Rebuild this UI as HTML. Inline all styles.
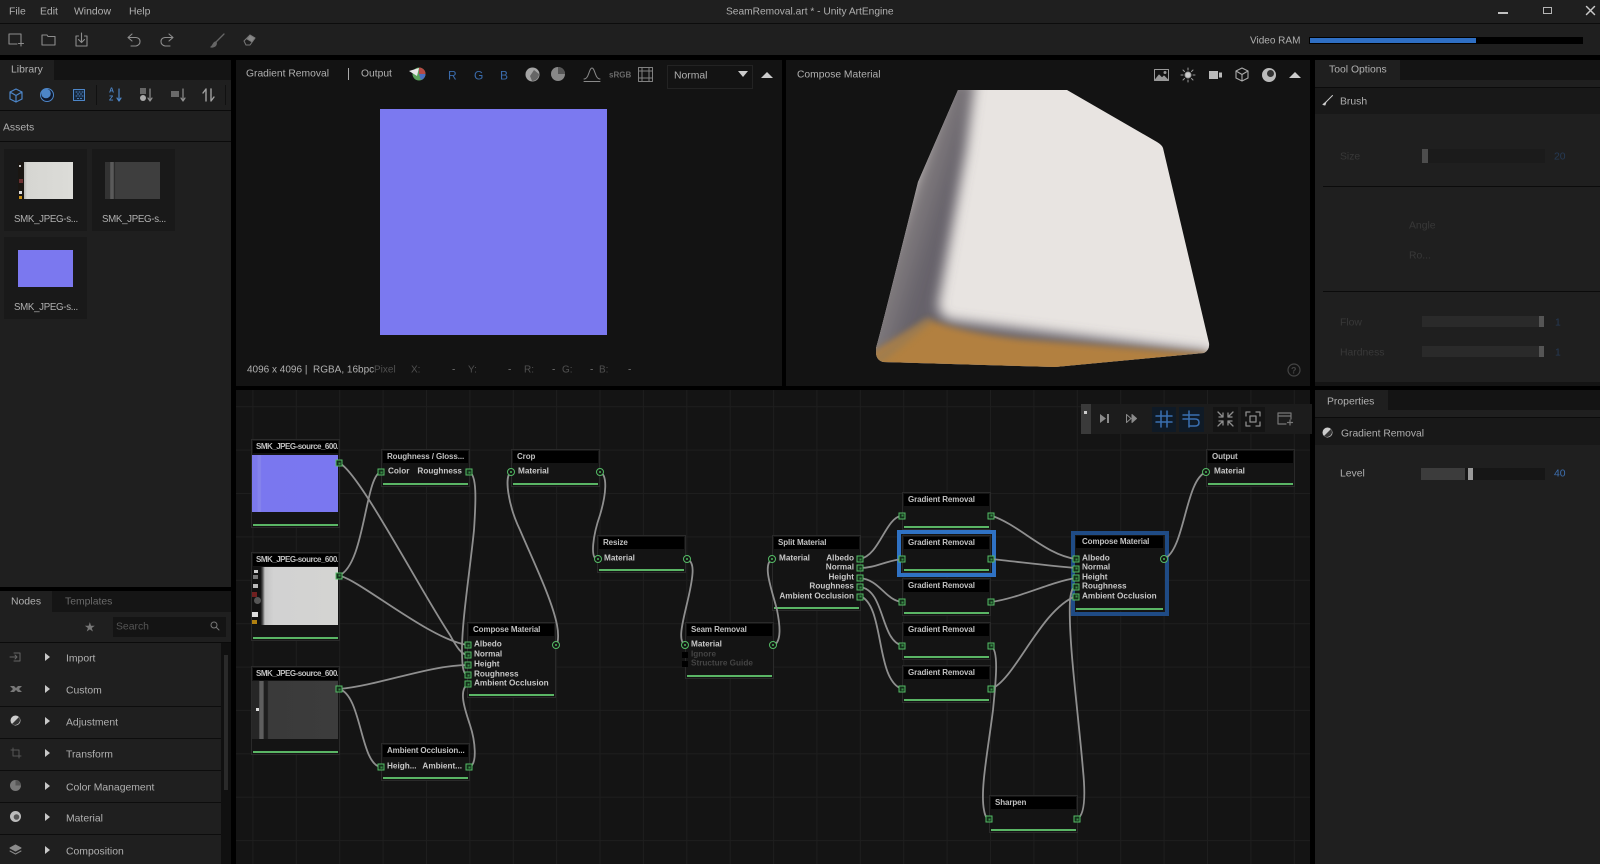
<!DOCTYPE html>
<html><head><meta charset="utf-8"><title>SeamRemoval.art * - Unity ArtEngine</title>
<style>
html,body{margin:0;padding:0;background:#000;}
body{position:relative;width:1600px;height:864px;overflow:hidden;font-family:"Liberation Sans",sans-serif;font-size:10.4px;color:#b0b0b0;filter:blur(.35px);}
.a{position:absolute;}
.t{position:absolute;white-space:nowrap;transform:translateY(calc(-50% + .6px));line-height:14px;}
svg.i{position:absolute;overflow:visible;fill:none;stroke-linecap:round;stroke-linejoin:round;}
.n{position:absolute;width:89px;background:#141414;border:1px solid #2a2a2a;box-sizing:border-box;}
.n .h{position:absolute;left:1px;right:1px;top:1px;height:12px;background:#000;color:#c0c0c0;font:bold 8px/11px "Liberation Sans",sans-serif;padding-left:4px;letter-spacing:-.1px;white-space:nowrap;overflow:hidden;}
.n .h.s{letter-spacing:-.5px;padding-left:3px;}
.n .g{position:absolute;left:1px;right:1px;bottom:1px;height:2px;background:#5ab565;}
.l{position:absolute;font:bold 8.2px/10px "Liberation Sans",sans-serif;color:#c8c8c8;white-space:nowrap;transform:translateY(calc(-50% - .7px));}
.r{text-align:right;}
.ps,.pc{position:absolute;width:7px;height:7px;box-sizing:border-box;border:1px solid #55bb66;background:#14301b;transform:translate(-50%,-50%);}
.pc{border-radius:50%;width:8px;height:8px;background:#141414;}
.ps:after,.pc:after{content:"";position:absolute;left:1.5px;top:1.5px;width:2px;height:2px;background:#3a8f48;}
.row{position:absolute;left:0;width:221px;height:31px;background:#1f1f1f;border-bottom:1px solid #0d0d0d;}
.tri{position:absolute;width:0;height:0;border-left:5px solid #c8c8c8;border-top:4px solid transparent;border-bottom:4px solid transparent;}
.card{position:absolute;width:83px;height:82px;background:#191919;}
.card span{position:absolute;left:10px;top:65px;color:#b0b0b0;font-size:9.7px;letter-spacing:-.3px;white-space:nowrap;}
.sl{position:absolute;background:#1b1b1b;}
.hd{position:absolute;top:0;bottom:0;width:6px;background:#555;}
</style></head><body>

<!-- title bar -->
<div class="a" style="left:0;top:0;width:1600px;height:23px;background:#1f1f1f;"></div>
<div class="a" style="left:0;top:23px;width:1600px;height:1px;background:#0c0c0c;"></div>
<div class="t" style="left:9px;top:11.5px;">File</div>
<div class="t" style="left:40px;top:11.5px;">Edit</div>
<div class="t" style="left:74px;top:11.5px;">Window</div>
<div class="t" style="left:129px;top:11.5px;">Help</div>
<div class="t" style="left:726px;top:11.5px;font-size:10.2px;">SeamRemoval.art * - Unity ArtEngine</div>
<div class="a" style="left:1498px;top:12px;width:10px;height:2px;background:#c0c0c0;"></div>
<div class="a" style="left:1543px;top:7px;width:7px;height:5px;border:1px solid #b5b5b5;"></div>
<svg class="i" style="left:1586px;top:6px" width="9" height="9" stroke="#c8c8c8" stroke-width="1.5"><path d="M0.5 0.5L8.5 8.5M8.5 0.5L0.5 8.5"/></svg>

<!-- toolbar -->
<div class="a" style="left:0;top:24px;width:1600px;height:31px;background:#1f1f1f;"></div>
<svg class="i" style="left:8px;top:33px" width="16" height="14" stroke="#8d8d8d" stroke-width="1.1"><path d="M9 11H1V1H13V8M13 8V13M10.500 10.500H15.500"/></svg>
<svg class="i" style="left:41px;top:34px" width="16" height="12" stroke="#8d8d8d" stroke-width="1.1"><path d="M1 1H6L7 2.500H14V11H1Z"/></svg>
<svg class="i" style="left:75px;top:32px" width="13" height="15" stroke="#8d8d8d" stroke-width="1.1"><path d="M3.500 4H1V14H12V4H9.500M6.500 1V10M3.500 7.500L6.500 10.500L9.500 7.500"/></svg>
<svg class="i" style="left:127px;top:33px" width="14" height="14" stroke="#8d8d8d" stroke-width="1.1"><path d="M5 1L1 4.500L5 8M1 4.500H9Q13 5 13 8.500T9 13H4"/></svg>
<svg class="i" style="left:160px;top:33px" width="14" height="14" stroke="#8d8d8d" stroke-width="1.1"><path d="M9 1L13 4.500L9 8M13 4.500H5Q1 5 1 8.500T5 13H10"/></svg>
<svg class="i" style="left:210px;top:33px" width="15" height="15" stroke="#666" stroke-width="1.3"><path d="M14 1L6 9"/><path d="M6 9C3 9 4 12 1 14C5 14 7 12 6 9Z" fill="#666"/></svg>
<svg class="i" style="left:243px;top:34px" width="13" height="12" stroke="#777" stroke-width="1"><path d="M1 7L7 1L12 4L7 11H3Z"/><path d="M7 1L12 4L9 8L4 5Z" fill="#888"/></svg>
<div class="t" style="left:1250px;top:41px;font-size:10px;">Video RAM</div>
<div class="a" style="left:1309px;top:37px;width:274px;height:7px;background:#000;"></div>
<div class="a" style="left:1310px;top:38px;width:166px;height:5px;background:#2f6fc4;"></div>

<!-- left panel: library -->
<div class="a" style="left:0;top:60px;width:231px;height:527px;background:#1f1f1f;"></div>
<div class="a" style="left:54px;top:60px;width:177px;height:20px;background:#141414;"></div>
<div class="t" style="left:11px;top:70px;">Library</div>
<svg class="i" style="left:9px;top:88px" width="14" height="15" stroke="#4d86c8" stroke-width="1.2"><path d="M7 1L13 4V11L7 14L1 11V4ZM1 4L7 7.500L13 4M7 7.500V14"/></svg>
<svg class="i" style="left:40px;top:88px" width="14" height="14"><circle cx="7" cy="7" r="6.500" fill="#10182a" stroke="#4d86c8"/><circle cx="6" cy="5.500" r="4.800" fill="#4d86c8"/></svg>
<svg class="i" style="left:73px;top:89px" width="12" height="12" stroke="#4d86c8"><rect x=".5" y=".5" width="11" height="11" fill="#16263a"/><path d="M3 3h1M6 3h1M9 3h1M4.500 5h1M7.500 5h1M3 7h1M6 7h1M9 7h1M4.500 9.500h1M7.500 9.500h1"/></svg>
<div class="a" style="left:96px;top:85px;width:1px;height:20px;background:#111;"></div>
<div class="t" style="left:109px;top:91px;font:bold 7px/8px 'Liberation Sans',sans-serif;color:#4d86c8;">A</div>
<div class="t" style="left:109px;top:99px;font:bold 7px/8px 'Liberation Sans',sans-serif;color:#4d86c8;">Z</div>
<svg class="i" style="left:116px;top:88px" width="6" height="14" stroke="#4d86c8" stroke-width="1.2"><path d="M3 1V13M1 10L3 13L5 10"/></svg>
<svg class="i" style="left:139px;top:88px" width="16" height="14" stroke="#8f8f8f" stroke-width="1.200"><rect x="1" y="0" width="6" height="6" fill="#666" stroke="none"/><circle cx="4" cy="10" r="3" fill="#aaa" stroke="none"/><path d="M11 1V13M9 10L11 13L13 10"/></svg>
<svg class="i" style="left:171px;top:89px" width="16" height="13" stroke="#8f8f8f" stroke-width="1.200"><rect x="0" y="2" width="8" height="6" fill="#6a6a6a" stroke="none"/><path d="M12 0V12M10 9L12 12L14 9"/></svg>
<svg class="i" style="left:202px;top:88px" width="13" height="14" stroke="#a0a0a0" stroke-width="1.400"><path d="M4 13V1L1 5M9 1V13L12 9"/></svg>
<div class="a" style="left:225px;top:85px;width:1px;height:20px;background:#111;"></div>
<div class="a" style="left:0;top:110px;width:231px;height:1px;background:#0b0b0b;"></div>
<div class="t" style="left:3px;top:127.500px;">Assets</div>
<div class="a" style="left:0;top:141px;width:231px;height:1px;background:#0b0b0b;"></div>

<div class="card" style="left:4px;top:149px;"><span>SMK_JPEG-s...</span></div>
<div class="a" style="left:18px;top:162px;width:7px;height:37px;background:#1a1612;"></div>
<div class="a" style="left:19px;top:165px;width:2px;height:2px;background:#ccc;"></div>
<div class="a" style="left:19px;top:179px;width:4px;height:4px;background:#6a3030;"></div>
<div class="a" style="left:19px;top:191px;width:3px;height:3px;background:#ddd;"></div>
<div class="a" style="left:19px;top:196px;width:3px;height:3px;background:#c89018;"></div>
<div class="a" style="left:24px;top:162px;width:49px;height:37px;background:linear-gradient(90deg,#b5b5b2,#d6d6d2 6%,#dcdcd8);"></div>
<div class="card" style="left:92px;top:149px;"><span>SMK_JPEG-s...</span></div>
<div class="a" style="left:105px;top:162px;width:55px;height:37px;background:linear-gradient(90deg,#333 0,#333 9%,#5a5a5a 10%,#5a5a5a 15%,#252525 17%,#3e3e3e 19%,#3e3e3e);"></div>
<div class="card" style="left:4px;top:237px;"><span>SMK_JPEG-s...</span></div>
<div class="a" style="left:18px;top:250px;width:55px;height:37px;background:#7b78ef;"></div>

<!-- left panel: nodes -->
<div class="a" style="left:0;top:591px;width:231px;height:273px;background:#1f1f1f;"></div>
<div class="a" style="left:52px;top:591px;width:179px;height:21px;background:#151515;"></div>
<div class="t" style="left:11px;top:602px;">Nodes</div>
<div class="t" style="left:65px;top:602px;color:#6a6a6a;">Templates</div>
<div class="a" style="left:113px;top:617px;width:113px;height:20px;background:#141414;"></div>
<div class="t" style="left:116px;top:627px;color:#555;">Search</div>
<div class="t" style="left:84px;top:627px;font-size:13px;color:#777;">★</div>
<svg class="i" style="left:210px;top:621px" width="10" height="10" stroke="#777"><circle cx="4" cy="4" r="3"/><path d="M6.500 6.500L9 9"/></svg>
<div class="a" style="left:0;top:642px;width:231px;height:1px;background:#0b0b0b;"></div>
<div class="a" style="left:221px;top:643px;width:10px;height:221px;background:#101010;"></div>
<div class="a" style="left:224px;top:655px;width:4px;height:135px;background:#2a2a2a;"></div>
<div class="row" style="top:643px;"></div><div class="row" style="top:674px;height:32px;"></div><div class="row" style="top:707px;"></div><div class="row" style="top:739px;"></div><div class="row" style="top:771px;"></div><div class="row" style="top:803px;"></div><div class="row" style="top:835px;height:29px;border:0;"></div>
<div class="tri" style="left:45px;top:653px;"></div><div class="tri" style="left:45px;top:685px;"></div><div class="tri" style="left:45px;top:717px;"></div><div class="tri" style="left:45px;top:749px;"></div><div class="tri" style="left:45px;top:782px;"></div><div class="tri" style="left:45px;top:813px;"></div><div class="tri" style="left:45px;top:846px;"></div>
<div class="t" style="left:66px;top:659px;">Import</div>
<div class="t" style="left:66px;top:691px;">Custom</div>
<div class="t" style="left:66px;top:723px;">Adjustment</div>
<div class="t" style="left:66px;top:755px;">Transform</div>
<div class="t" style="left:66px;top:788px;">Color Management</div>
<div class="t" style="left:66px;top:819px;">Material</div>
<div class="t" style="left:66px;top:852px;">Composition</div>
<svg class="i" style="left:10px;top:652px" width="11" height="10" stroke="#666"><path d="M4 1H10V9H4M0 5H7M5 3L7 5L5 7"/></svg>
<svg class="i" style="left:10px;top:685px" width="12" height="8"><path d="M0 1L3 4L0 7H4L6 5L8 7H12L9 4L12 1H8L6 3L4 1Z" fill="#777"/></svg>
<svg class="i" style="left:10px;top:715px" width="11" height="11"><circle cx="5.500" cy="5.500" r="5" fill="#ccc"/><path d="M9 2A5 5 0 0 1 2 9Z" fill="#333"/></svg>
<svg class="i" style="left:11px;top:748px" width="10" height="10" stroke="#555"><path d="M2 0V8H10M0 2H8V10"/></svg>
<svg class="i" style="left:10px;top:780px" width="11" height="11"><circle cx="5.500" cy="5.500" r="5.500" fill="#777"/><path d="M5.500 0A5.500 5.500 0 0 1 11 5.500H5.500Z" fill="#555"/></svg>
<svg class="i" style="left:10px;top:811px" width="11" height="11"><circle cx="5.500" cy="5.500" r="5.500" fill="#bbb"/><circle cx="6.500" cy="6" r="2.800" fill="#555"/></svg>
<svg class="i" style="left:10px;top:845px" width="11" height="9" stroke="#8a8a8a"><path d="M0 3L5.500 0L11 3L5.500 6Z" fill="#8a8a8a"/><path d="M0 6L5.500 9L11 6"/></svg>

<!-- 2D view -->
<div class="a" style="left:236px;top:60px;width:546px;height:326px;background:#131313;"></div>
<div class="t" style="left:246px;top:74px;font-size:10.3px;">Gradient Removal</div>
<div class="a" style="left:348px;top:68px;width:1px;height:12px;background:#aaa;"></div>
<div class="t" style="left:361px;top:74px;font-size:10.3px;">Output</div>
<svg class="i" style="left:409px;top:67px" width="18" height="14"><circle cx="10" cy="7" r="6.500" fill="#5aa15a"/><path d="M10 7L10 .5A6.500 6.500 0 0 1 16.500 7Z" fill="#b54a44"/><path d="M10 7L16.500 7A6.500 6.500 0 0 1 12 13Z" fill="#4a6fc0"/><path d="M0 4L10 1L8 9Z" fill="#e8e8e8"/></svg>
<div class="t" style="left:448px;top:75px;font-size:12px;color:#3a6bab;">R</div>
<div class="t" style="left:474px;top:75px;font-size:12px;color:#3a6bab;">G</div>
<div class="t" style="left:500px;top:75px;font-size:12px;color:#3a6bab;">B</div>
<svg class="i" style="left:525px;top:67px" width="15" height="15"><circle cx="7.500" cy="7.500" r="7" fill="#a5a5a5"/><path d="M7 14A7 7 0 0 0 14 7L9 3L5 9Z" fill="#666"/></svg>
<svg class="i" style="left:551px;top:67px" width="14" height="14"><circle cx="7" cy="7" r="7" fill="#888"/><path d="M7 0A7 7 0 0 1 14 7H7Z" fill="#555"/></svg>
<svg class="i" style="left:584px;top:67px" width="16" height="15" stroke="#8a8a8a"><path d="M0 12C5 12 5 1 8 1S11 12 16 12M0 14.500H16"/></svg>
<div class="t" style="left:609px;top:75px;font:bold 8px/10px 'Liberation Sans',sans-serif;color:#6a6a6a;">sRGB</div>
<svg class="i" style="left:638px;top:67px" width="15" height="15" stroke="#808080"><path d="M.5 .5H14.500V14.500H.5ZM4 .5V14.500M11 .5V14.500M.5 4H14.500M.5 11H14.500"/></svg>
<div class="a" style="left:667px;top:65px;width:84px;height:22px;border:1px solid #232323;"></div>
<div class="t" style="left:674px;top:76px;">Normal</div>
<div class="a" style="left:738px;top:71px;width:0;height:0;border-left:5px solid transparent;border-right:5px solid transparent;border-top:6px solid #ccc;"></div>
<div class="a" style="left:761px;top:72px;width:0;height:0;border-left:6px solid transparent;border-right:6px solid transparent;border-bottom:6px solid #ccc;"></div>
<div class="a" style="left:380px;top:109px;width:227px;height:226px;background:#7b79f0;"></div>
<div class="t" style="left:247px;top:369.500px;font-size:10px;">4096 x 4096 |&nbsp; RGBA, 16bpc</div>
<div class="t" style="left:374px;top:369.500px;font-size:10px;color:#505050;">Pixel</div>
<div class="t" style="left:411px;top:369.500px;font-size:10px;color:#505050;">X:</div>
<div class="t" style="left:452px;top:369.500px;font-size:10px;color:#777;">-</div>
<div class="t" style="left:468px;top:369.500px;font-size:10px;color:#505050;">Y:</div>
<div class="t" style="left:508px;top:369.500px;font-size:10px;color:#777;">-</div>
<div class="t" style="left:524px;top:369.500px;font-size:10px;color:#505050;">R:</div>
<div class="t" style="left:552px;top:369.500px;font-size:10px;color:#777;">-</div>
<div class="t" style="left:562px;top:369.500px;font-size:10px;color:#505050;">G:</div>
<div class="t" style="left:590px;top:369.500px;font-size:10px;color:#777;">-</div>
<div class="t" style="left:599px;top:369.500px;font-size:10px;color:#505050;">B:</div>
<div class="t" style="left:628px;top:369.500px;font-size:10px;color:#777;">-</div>

<!-- 3D view -->
<div class="a" style="left:786px;top:60px;width:524px;height:326px;background:#131313;"></div>
<div class="t" style="left:797px;top:74.500px;font-size:10.3px;">Compose Material</div>
<svg class="i" style="left:1154px;top:69px" width="15" height="12" stroke="#999"><rect x=".5" y=".5" width="14" height="11"/><path d="M1 11L5 6L8 9L10 7L14 11Z" fill="#999"/><circle cx="11" cy="3.500" r="1" fill="#999"/></svg>
<svg class="i" style="left:1181px;top:68px" width="14" height="14" stroke="#999"><circle cx="7" cy="7" r="3" fill="#ccc"/><path d="M7 0V2M7 12V14M0 7H2M12 7H14M2 2L3.500 3.500M10.500 10.500L12 12M2 12L3.500 10.500M10.500 3.500L12 2"/></svg>
<svg class="i" style="left:1209px;top:70px" width="13" height="10"><rect x="0" y="1" width="9" height="8" fill="#bbb"/><rect x="10" y="2.500" width="3" height="5" fill="#bbb"/></svg>
<svg class="i" style="left:1235px;top:67px" width="14" height="15" stroke="#aaa" stroke-width="1.100"><path d="M7 1L13 4V11L7 14L1 11V4ZM1 4L7 7.500L13 4M7 7.500V14"/></svg>
<svg class="i" style="left:1262px;top:68px" width="14" height="14"><circle cx="7" cy="7" r="6.500" fill="#bbb" stroke="#bbb"/><circle cx="8.500" cy="5.500" r="3.500" fill="#333"/></svg>
<div class="a" style="left:1289px;top:72px;width:0;height:0;border-left:6px solid transparent;border-right:6px solid transparent;border-bottom:6px solid #ccc;"></div>
<svg class="i" style="left:1287px;top:363px" width="14" height="14" stroke="#444" stroke-width="1.200"><circle cx="7" cy="7" r="6"/></svg>
<div class="t" style="left:1291px;top:370px;font:bold 9px/10px 'Liberation Sans',sans-serif;color:#444;">?</div>
<svg class="a" style="left:786px;top:60px;" width="524" height="326" viewBox="786 60 524 326">
<defs>
<clipPath id="cu"><path d="M958 90H1067L1157 142Q1162 145 1163 148L1209 343Q1210 350 1204 353L1055 367L883 362Q876 360 876 352L876 348Q880 335 918 182Z"/></clipPath>
<filter id="b1" x="-30%" y="-30%" width="160%" height="160%"><feGaussianBlur stdDeviation="6"/></filter>
<filter id="b2" x="-30%" y="-30%" width="160%" height="160%"><feGaussianBlur stdDeviation="3.500"/></filter>
<linearGradient id="sd" gradientUnits="userSpaceOnUse" x1="905" y1="180" x2="950" y2="194"><stop offset="0" stop-color="#8f8989"/><stop offset="1" stop-color="#66626a"/></linearGradient>
</defs>
<g clip-path="url(#cu)">
<rect x="860" y="80" width="370" height="300" fill="#e8e4e1"/>
<path d="M950 80L975 80L966 150L938 305Q939 316 950 320L1210 352L1210 380L860 380L860 340Z" fill="url(#sd)" filter="url(#b1)"/>
<path d="M928 319Q960 332 1020 339L1210 354V380H860V360Z" fill="#b2803f" filter="url(#b2)"/>
<path d="M876 357L928 318L932 322L876 366Z" fill="#8d7a5d" filter="url(#b2)" opacity=".6"/>
</g>
</svg>

<!-- right: tool options -->
<div class="a" style="left:1315px;top:60px;width:285px;height:326px;background:#1f1f1f;"></div>
<div class="a" style="left:1400px;top:60px;width:200px;height:20px;background:#141414;"></div>
<div class="a" style="left:1315px;top:87px;width:285px;height:1px;background:#0b0b0b;"></div>
<div class="a" style="left:1315px;top:88px;width:285px;height:26px;background:#181818;"></div>
<div class="t" style="left:1329px;top:70px;">Tool Options</div>
<svg class="i" style="left:1322px;top:95px" width="11" height="11" stroke="#ccc"><path d="M10.500 .5L4 7"/><path d="M4 7L1 9.500L3 10Z" fill="#ddd"/></svg>
<div class="t" style="left:1340px;top:102px;">Brush</div>
<div class="t" style="left:1340px;top:157px;color:#383838;">Size</div>
<div class="sl" style="left:1422px;top:149px;width:123px;height:14px;"><div class="hd" style="left:0;background:#4d4d4d;"></div></div>
<div class="t" style="left:1554px;top:157px;color:#263a55;">20</div>
<div class="a" style="left:1323px;top:186px;width:277px;height:1px;background:#0b0b0b;"></div>
<div class="t" style="left:1409px;top:225.500px;color:#383838;">Angle</div>
<div class="t" style="left:1409px;top:255.500px;color:#383838;">Ro...</div>
<div class="a" style="left:1323px;top:291px;width:277px;height:1px;background:#0b0b0b;"></div>
<div class="t" style="left:1340px;top:322.500px;color:#383838;">Flow</div>
<div class="sl" style="left:1422px;top:316px;width:117px;height:11px;background:#2a2a2a;"></div><div class="a" style="left:1539px;top:316px;width:5px;height:11px;background:#555;"></div>
<div class="t" style="left:1555px;top:322.500px;color:#263a55;">1</div>
<div class="t" style="left:1340px;top:353px;color:#383838;">Hardness</div>
<div class="sl" style="left:1422px;top:346px;width:117px;height:11px;background:#2a2a2a;"></div><div class="a" style="left:1539px;top:346px;width:5px;height:11px;background:#555;"></div>
<div class="t" style="left:1555px;top:353px;color:#263a55;">1</div>
<div class="a" style="left:1315px;top:382px;width:285px;height:4px;background:#141414;"></div>

<!-- right: properties -->
<div class="a" style="left:1315px;top:390px;width:285px;height:474px;background:#1f1f1f;"></div>
<div class="a" style="left:1388px;top:390px;width:212px;height:20px;background:#141414;"></div>
<div class="a" style="left:1315px;top:417px;width:285px;height:1px;background:#0b0b0b;"></div>
<div class="a" style="left:1315px;top:418px;width:285px;height:27px;background:#181818;"></div>
<div class="t" style="left:1327px;top:402px;">Properties</div>
<svg class="i" style="left:1322px;top:427px" width="11" height="11"><circle cx="5.500" cy="5.500" r="5" fill="#ccc"/><path d="M9 2A5 5 0 0 1 2 9Z" fill="#333"/></svg>
<div class="t" style="left:1341px;top:434px;font-size:10.3px;">Gradient Removal</div>
<div class="t" style="left:1340px;top:474px;">Level</div>
<div class="sl" style="left:1421px;top:468px;width:124px;height:12px;background:#161616;"></div>
<div class="a" style="left:1421px;top:468px;width:44px;height:12px;background:#3c3c3c;"></div>
<div class="a" style="left:1468px;top:468px;width:5px;height:12px;background:#999;"></div>
<div class="t" style="left:1554px;top:474px;color:#3d6fb0;">40</div>

<!-- graph -->
<div class="a" style="left:236px;top:390px;width:1074px;height:474px;background-color:#141414;background-image:linear-gradient(90deg,#1e1e1e 1px,transparent 1px),linear-gradient(#1e1e1e 1px,transparent 1px);background-size:43.400px 43.400px;background-position:16.400px 16.200px;"></div>

<!-- graph toolbar -->
<div class="a" style="left:1081px;top:404px;width:231px;height:30px;background:#1c1c1c;"></div>
<div class="a" style="left:1081px;top:404px;width:10px;height:30px;background:#3a3a3a;"></div>
<div class="a" style="left:1084px;top:411px;width:3px;height:3px;background:#ccc;"></div>
<svg class="i" style="left:1100px;top:414px" width="9" height="9"><path d="M0 0L6 4.500L0 9Z" fill="#8a8a8a"/><rect x="7" y="0" width="2" height="9" fill="#8a8a8a"/></svg>
<svg class="i" style="left:1126px;top:414px" width="11" height="9" stroke="#8a8a8a"><path d="M.5 .5L5 4.500L.5 8.500Z"/><path d="M6 .5L10.500 4.500L6 8.500Z" fill="#8a8a8a"/></svg>
<div class="a" style="left:1152px;top:407px;width:24px;height:25px;background:#0f1a26;"></div>
<div class="a" style="left:1179px;top:407px;width:25px;height:25px;background:#0f1a26;"></div>
<div class="a" style="left:1213px;top:407px;width:25px;height:25px;background:#141414;"></div>
<div class="a" style="left:1241px;top:407px;width:24px;height:25px;background:#141414;"></div>
<svg class="i" style="left:1156px;top:411px" width="16" height="16" stroke="#3a6fb0" stroke-width="1.500"><path d="M5 0V16M11 0V16M0 5H16M0 11H16"/></svg>
<svg class="i" style="left:1183px;top:411px" width="17" height="16" stroke="#3a6fb0" stroke-width="1.500"><path d="M6 0V16M0 4H16M0 8H12Q16 8 16 11.500T12 15H6"/></svg>
<svg class="i" style="left:1217px;top:411px" width="17" height="16" stroke="#8d8d8d" stroke-width="1.300"><path d="M1 1L6 6M6 2V6H2M16 1L11 6M11 2V6H15M1 15L6 10M6 14V10H2M16 15L11 10M11 14V10H15"/></svg>
<svg class="i" style="left:1245px;top:411px" width="16" height="16" stroke="#8d8d8d" stroke-width="1.300"><path d="M1 5V1H5M11 1H15V5M1 11V15H5M15 11V15H11"/><rect x="5" y="5" width="6" height="6"/></svg>
<svg class="i" style="left:1277px;top:412px" width="16" height="14" stroke="#777" stroke-width="1.200"><path d="M9 12H1V1H14V7M1 4H14M13 8V13M10.500 10.500H15.500"/></svg>

<!-- nodes -->
<div class="n" style="left:251px;top:439px;height:89px;"><div class="h s">SMK_JPEG-source_600.</div><div class="g"></div></div>
<div class="a" style="left:252px;top:455px;width:86px;height:57px;background:linear-gradient(90deg,#7c79ec,#7c79ec 6%,#8583ec 7%,#8583ec 10%,#7a77ef 11%,#7a77f0);"></div>
<div class="n" style="left:251px;top:552px;height:89px;"><div class="h s">SMK_JPEG-source_600.</div><div class="g"></div></div>
<div class="a" style="left:252px;top:567px;width:86px;height:58px;background:linear-gradient(90deg,#111 0,#111 10%,#444 12%,#c4c4c4 15%,#d2d2d2 25%,#d4d4d2);"></div>
<div class="a" style="left:254px;top:570px;width:4px;height:3px;background:#ccc;"></div>
<div class="a" style="left:253px;top:575px;width:5px;height:4px;background:#777;"></div>
<div class="a" style="left:253px;top:584px;width:5px;height:4px;background:#bbb;"></div>
<div class="a" style="left:252px;top:592px;width:5px;height:5px;background:#702020;"></div>
<div class="a" style="left:254px;top:597px;width:7px;height:7px;background:#555;border-radius:50%;"></div>
<div class="a" style="left:252px;top:612px;width:6px;height:5px;background:#ddd;"></div>
<div class="a" style="left:252px;top:620px;width:5px;height:4px;background:#b08010;"></div>
<div class="n" style="left:251px;top:666px;height:89px;"><div class="h s">SMK_JPEG-source_600.</div><div class="g"></div></div>
<div class="a" style="left:252px;top:681px;width:86px;height:58px;background:linear-gradient(90deg,#262626 0,#262626 8%,#5e5e5e 9%,#5e5e5e 13%,#1e1e1e 14%,#1e1e1e 18%,#3a3a3a 19%,#3c3c3c);"></div>
<div class="a" style="left:256px;top:708px;width:3px;height:3px;background:#ddd;"></div>

<div class="n" style="left:381px;top:449px;height:38px;"><div class="h">Roughness / Gloss...</div><div class="g"></div></div>
<div class="l" style="left:388px;top:471.500px;">Color</div><div class="l" style="right:1138px;top:471.500px;">Roughness</div>
<div class="n" style="left:511px;top:449px;height:38px;"><div class="h">Crop</div><div class="g"></div></div>
<div class="l" style="left:518px;top:471.500px;">Material</div>
<div class="n" style="left:467px;top:622px;height:76px;"><div class="h">Compose Material</div><div class="g"></div></div>
<div class="l" style="left:474px;top:645px;">Albedo</div><div class="l" style="left:474px;top:655px;">Normal</div><div class="l" style="left:474px;top:664.500px;">Height</div><div class="l" style="left:474px;top:674.500px;">Roughness</div><div class="l" style="left:474px;top:683.500px;">Ambient Occlusion</div>
<div class="n" style="left:381px;top:743px;height:38px;"><div class="h">Ambient Occlusion...</div><div class="g"></div></div>
<div class="l" style="left:387px;top:767px;">Heigh...</div><div class="l" style="right:1138px;top:767px;">Ambient...</div>
<div class="n" style="left:597px;top:535px;height:38px;"><div class="h">Resize</div><div class="g"></div></div>
<div class="l" style="left:604px;top:558.500px;">Material</div>
<div class="n" style="left:685px;top:622px;height:57px;"><div class="h">Seam Removal</div><div class="g"></div></div>
<div class="l" style="left:691px;top:645px;">Material</div><div class="l" style="left:691px;top:655px;color:#444;">Ignore</div><div class="l" style="left:691px;top:664px;color:#444;">Structure Guide</div>
<div class="a" style="left:682px;top:652px;width:6px;height:6px;background:#000;"></div><div class="a" style="left:682px;top:661px;width:6px;height:6px;background:#000;"></div>
<div class="n" style="left:772px;top:535px;height:76px;"><div class="h">Split Material</div><div class="g"></div></div>
<div class="l" style="left:779px;top:558.500px;">Material</div>
<div class="l r" style="right:746px;top:558.500px;">Albedo</div><div class="l r" style="right:746px;top:568px;">Normal</div><div class="l r" style="right:746px;top:577.500px;">Height</div><div class="l r" style="right:746px;top:587px;">Roughness</div><div class="l r" style="right:746px;top:596.500px;">Ambient Occlusion</div>

<div class="n" style="left:902px;top:492px;height:38px;"><div class="h">Gradient Removal</div><div class="g"></div></div>
<div class="n" style="left:902px;top:535px;height:38px;"><div class="h">Gradient Removal</div><div class="g"></div></div>
<div class="a" style="left:897px;top:530px;width:99px;height:47px;box-sizing:border-box;border:4px solid #2f72c4;"></div>
<div class="n" style="left:902px;top:578px;height:38px;"><div class="h">Gradient Removal</div><div class="g"></div></div>
<div class="n" style="left:902px;top:622px;height:38px;"><div class="h">Gradient Removal</div><div class="g"></div></div>
<div class="n" style="left:902px;top:665px;height:38px;"><div class="h">Gradient Removal</div><div class="g"></div></div>
<div class="n" style="left:1075px;top:535px;height:76px;border:0;"><div class="h" style="padding-left:6px;">Compose Material</div><div class="g"></div></div>
<div class="a" style="left:1071px;top:531px;width:98px;height:85px;box-sizing:border-box;border:4px solid #1f4b85;"></div>
<div class="l" style="left:1082px;top:558.500px;">Albedo</div><div class="l" style="left:1082px;top:568px;">Normal</div><div class="l" style="left:1082px;top:577.500px;">Height</div><div class="l" style="left:1082px;top:587px;">Roughness</div><div class="l" style="left:1082px;top:596.500px;">Ambient Occlusion</div>
<div class="n" style="left:1206px;top:449px;height:38px;"><div class="h">Output</div><div class="g"></div></div>
<div class="l" style="left:1214px;top:471.500px;">Material</div>
<div class="n" style="left:989px;top:795px;height:38px;"><div class="h">Sharpen</div><div class="g"></div></div>

<!-- wires -->
<svg class="a" style="left:0;top:0;" width="1600" height="864" fill="none" stroke="#8f8f8f" stroke-width="1.800">
<path d="M339 463C358 470 420 590 450 635C457 648 462 655 468 655"/>
<path d="M339 575.500C365 565 365 475 381 472"/>
<path d="M339 575.500C360 580 430 640 468 645"/>
<path d="M339 689C380 685 430 665 468 665"/>
<path d="M339 689C362 695 360 765 381 767"/>
<path d="M469 472C477 474 476 500 474 530C470 570 462 620 462 650C462 670 464 675 468 675"/>
<path d="M469 767C478 765 475 740 470 725C465 710 458 690 468 684"/>
<path d="M511 472C504 476 508 505 520 530C535 565 552 600 557 625C559 635 558 645 556 645"/>
<path d="M600 472C608 475 606 495 600 515C593 535 590 558 597 559"/>
<path d="M687 559C695 562 693 575 690 590C685 615 676 640 685 645"/>
<path d="M773 646C782 642 780 625 777 610C772 590 762 565 772 559"/>
<path d="M860 559C880 555 885 518 902 515.500"/>
<path d="M860 568C875 568 885 561 902 559"/>
<path d="M860 578C880 580 885 600 902 602"/>
<path d="M860 587C885 590 880 640 902 645.500"/>
<path d="M860 596C885 605 875 680 902 689"/>
<path d="M991 515.500C1020 525 1045 555 1076 559"/>
<path d="M991 559C1020 562 1050 566 1076 568"/>
<path d="M991 602C1020 598 1050 582 1076 578"/>
<path d="M991 689C1015 680 1040 610 1076 596"/>
<path d="M991 646C999 650 996 680 993 710C988 750 980 790 984 810C985 816 987 819 989 819"/>
<path d="M1077 819C1086 815 1085 790 1083 770C1078 710 1068 640 1070 600C1071 590 1073 587 1076 587"/>
<path d="M1164 559C1185 550 1185 480 1206 472"/>
</svg>

<!-- ports -->
<i class="ps" style="left:339px;top:463px;"></i><i class="ps" style="left:339px;top:575.500px;"></i><i class="ps" style="left:339px;top:689px;"></i>
<i class="ps" style="left:381px;top:472px;"></i><i class="ps" style="left:469px;top:472px;"></i>
<i class="pc" style="left:511px;top:472px;"></i><i class="pc" style="left:600px;top:472px;"></i>
<i class="ps" style="left:468px;top:645px;"></i><i class="ps" style="left:468px;top:655px;"></i><i class="ps" style="left:468px;top:665px;"></i><i class="ps" style="left:468px;top:675px;"></i><i class="ps" style="left:468px;top:684px;"></i><i class="pc" style="left:556px;top:645px;"></i>
<i class="ps" style="left:381px;top:767px;"></i><i class="ps" style="left:469px;top:767px;"></i>
<i class="pc" style="left:598px;top:559px;"></i><i class="pc" style="left:687px;top:559px;"></i>
<i class="pc" style="left:685px;top:645px;"></i><i class="pc" style="left:773px;top:645px;"></i>
<i class="pc" style="left:772px;top:559px;"></i>
<i class="ps" style="left:860px;top:559px;"></i><i class="ps" style="left:860px;top:568px;"></i><i class="ps" style="left:860px;top:578px;"></i><i class="ps" style="left:860px;top:587px;"></i><i class="ps" style="left:860px;top:596.500px;"></i>
<i class="ps" style="left:902px;top:515.500px;"></i><i class="ps" style="left:991px;top:515.500px;"></i>
<i class="ps" style="left:902px;top:559px;"></i><i class="ps" style="left:991px;top:559px;"></i>
<i class="ps" style="left:902px;top:602px;"></i><i class="ps" style="left:991px;top:602px;"></i>
<i class="ps" style="left:902px;top:645.500px;"></i><i class="ps" style="left:991px;top:645.500px;"></i>
<i class="ps" style="left:902px;top:689px;"></i><i class="ps" style="left:991px;top:689px;"></i>
<i class="ps" style="left:1076px;top:559px;"></i><i class="ps" style="left:1076px;top:568.500px;"></i><i class="ps" style="left:1076px;top:578px;"></i><i class="ps" style="left:1076px;top:587px;"></i><i class="ps" style="left:1076px;top:596.500px;"></i><i class="pc" style="left:1164px;top:559px;"></i>
<i class="pc" style="left:1206px;top:472px;"></i>
<i class="ps" style="left:989px;top:819px;"></i><i class="ps" style="left:1077px;top:819px;"></i>
</body></html>
